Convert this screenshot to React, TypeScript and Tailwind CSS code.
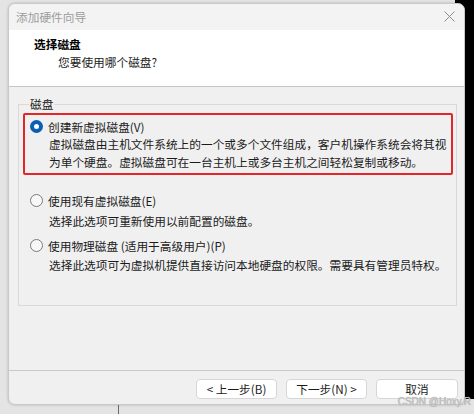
import React from "react";

const font = { fontFamily: '"Noto Sans CJK SC", "Noto Sans", sans-serif' };

function Radio({ checked }: { checked?: boolean }) {
  return checked ? (
    <span className="w-[13px] h-[13px] rounded-full bg-[#0a5fb4] flex items-center justify-center shrink-0">
      <span className="w-[5px] h-[5px] rounded-full bg-white" />
    </span>
  ) : (
    <span className="w-[13px] h-[13px] rounded-full border border-[#7a7a7a] bg-[#f7f7f7] shrink-0" />
  );
}

export default function App() {
  return (
    <div className="relative w-[474px] h-[414px] bg-[#e4e4e4] overflow-hidden text-[#1b1b1b]" style={font}>
      <div className="absolute left-[455px] top-0 w-[19px] h-[399px] bg-black" />
      <div className="absolute left-[118px] top-[404px] w-px h-[10px] bg-[#6a6a6a]" />

      <div className="absolute left-[8px] top-[3px] w-[457px] h-[402px] rounded-[7px] border border-[#c9c9c9] bg-[#f0f0f0] flex flex-col overflow-hidden shadow-[0_0_3px_rgba(0,0,0,0.2)]">
        {/* title bar */}
        <div className="h-[26px] bg-[#f3f3f3] flex items-center justify-between pl-[7px] pr-[9px] pb-[1px]">
          <span className="text-[11.7px] leading-4 text-[#9c9c9c]">添加硬件向导</span>
          <svg width="11" height="11" viewBox="0 0 11 11">
            <path d="M0.5 0.5 L10.5 10.5 M10.5 0.5 L0.5 10.5" stroke="#8c8c8c" strokeWidth="1" fill="none" />
          </svg>
        </div>

        {/* header */}
        <div className="h-[57px] bg-white border-b border-[#c6c6c6] pt-[6px]">
          <div className="pl-[25px] text-[11.7px] leading-4 font-bold text-black">选择磁盘</div>
          <div className="pl-[49px] mt-[2px] text-[11.7px] leading-4">您要使用哪个磁盘?</div>
        </div>

        {/* body */}
        <div className="flex-1 pl-[9px] pr-[7px] pt-[9px]">
          <fieldset className="border border-[#d9d9d9] pb-[31px] pl-[4px] pr-[3px]">
            <legend className="ml-[6px] px-px text-[11.7px] leading-4">磁盘</legend>
            <div className="mt-[1px] border-2 border-[#e3262a] rounded-[2px] pl-[5px] pt-[3px] pb-[2px] h-[62px]">
              <div className="flex items-center gap-[5px] h-[17px]">
                <Radio checked />
                <span className="text-[11.7px] leading-4">创建新虚拟磁盘(V)</span>
              </div>
              <div className="pl-[19px] text-[11.7px] leading-[18px]">
                虚拟磁盘由主机文件系统上的一个或多个文件组成，客户机操作系统会将其视
                <br />
                为单个硬盘。虚拟磁盘可在一台主机上或多台主机之间轻松复制或移动。
              </div>
            </div>

            <div className="pl-[7px]">
              <div className="mt-[17px] flex items-center gap-[5px] h-[17px]">
                <Radio />
                <span className="text-[11.7px] leading-4">使用现有虚拟磁盘(E)</span>
              </div>
              <div className="mt-[3px] pl-[19px] text-[11.7px] leading-[18px]">选择此选项可重新使用以前配置的磁盘。</div>

              <div className="mt-[7px] flex items-center gap-[5px] h-[17px]">
                <Radio />
                <span className="text-[11.7px] leading-4">使用物理磁盘 (适用于高级用户)(P)</span>
              </div>
              <div className="mt-[2px] pl-[19px] text-[11.7px] leading-[18px]">选择此选项可为虚拟机提供直接访问本地硬盘的权限。需要具有管理员特权。</div>
            </div>
          </fieldset>
        </div>

        {/* footer */}
        <div className="h-[34px] border-t border-[#cacaca] flex justify-end items-start gap-[9px] pt-[8px] pr-[6px]">
          <button className="w-[81px] h-[20px] bg-white border border-[#d6d6d6] rounded-[4px] text-[11.7px] leading-4">&lt; 上一步(B)</button>
          <button className="w-[81px] h-[20px] bg-white border border-[#d6d6d6] rounded-[4px] text-[11.7px] leading-4">下一步(N) &gt;</button>
          <button className="w-[82px] h-[20px] bg-white border border-[#d6d6d6] rounded-[4px] text-[11.7px] leading-4">取消</button>
        </div>
      </div>

      <div
        className="absolute right-[3px] top-[396px] text-[10px] leading-3 text-[#c4c4c4]"
        style={{ fontFamily: '"Liberation Sans", Arial, sans-serif', textShadow: "0 0 1px #9a9a9a" }}
      >
        CSDN @Hoxy.R
      </div>
    </div>
  );
}
